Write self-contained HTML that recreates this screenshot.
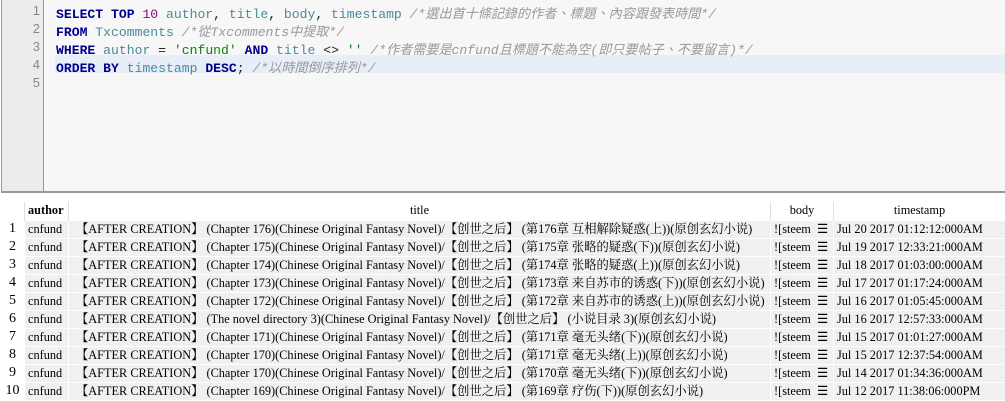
<html><head><style>
body{margin:0;width:1005px;height:401px;overflow:hidden;background:#fff;position:relative;font-family:"Liberation Serif","Noto Serif CJK SC",serif}
#ed{position:absolute;left:1px;top:0;width:1004px;height:193px;background:#f7f7f7;border-left:1px solid #999;border-bottom:2px solid #999;box-sizing:border-box}
#gut{position:absolute;left:0;top:0;width:41px;height:100%;background:#ececec;border-right:1px solid #999}
.ln{position:absolute;left:0;width:38px;text-align:right;font:13px "Liberation Sans",sans-serif;color:#888}
.cl{position:absolute;left:54px;font:13.1px "Liberation Mono","Noto Sans CJK TC",monospace;white-space:pre;color:#4a8a9a}
.k{color:#000090;font-weight:bold}.n{color:#900090}.s{color:#108010}.c{color:#999;font-style:italic}.o{color:#222}
table{position:absolute;left:0;top:202px;width:1005px;border-collapse:collapse;font-size:12.3px;table-layout:fixed}
td{height:18px;padding:0 0 0 3px;border:1px solid #fff;background:#f0f0f0;white-space:nowrap;overflow:hidden;line-height:16px}
th{height:18px;font-weight:normal;background:#fff;border-right:1px solid #e0e0e0;padding:0;overflow:hidden}
td.r{background:#fff;text-align:center;font-size:14px;padding:0}
td.t{padding-left:7px}
</style></head><body>
<div id="ed"><div id="gut"></div>
<div style="position:absolute;left:53px;top:55px;right:0;height:18px;background:#e8eef8"></div>
<div class="ln" style="top:3px">1</div><div class="ln" style="top:21px">2</div><div class="ln" style="top:39px">3</div><div class="ln" style="top:57px">4</div><div class="ln" style="top:75px">5</div>
<div class="cl" style="top:3px"><span class="k">SELECT TOP</span> <span class="n">10</span> author<span class="o">,</span> title<span class="o">,</span> body<span class="o">,</span> timestamp <span class="c">/*選出首十條記錄的作者、標題、內容跟發表時間*/</span></div>
<div class="cl" style="top:21px"><span class="k">FROM</span> Txcomments <span class="c">/*從Txcomments中提取*/</span></div>
<div class="cl" style="top:39px"><span class="k">WHERE</span> author <span class="o">=</span> <span class="s">'cnfund'</span> <span class="k">AND</span> title <span class="o">&lt;&gt;</span> <span class="s">''</span> <span class="c">/*作者需要是cnfund且標題不能為空(即只要帖子、不要留言)*/</span></div>
<div class="cl" style="top:57px"><span class="k">ORDER BY</span> timestamp <span class="k">DESC</span><span class="o">;</span> <span class="c">/*以時間倒序排列*/</span></div>
</div>
<table>
<colgroup><col style="width:24px"><col style="width:44px"><col style="width:702px"><col style="width:63px"><col style="width:172px"></colgroup>
<tr><th></th><th style="font-weight:bold;text-align:left;padding-left:3px">author</th><th>title</th><th>body</th><th>timestamp</th></tr>
<tr><td class="r">1</td><td>cnfund</td><td class="t">【AFTER CREATION】 (Chapter 176)(Chinese Original Fantasy Novel)/【创世之后】 (第176章 互相解除疑惑(上))(原创玄幻小说)</td><td>![steem &nbsp;☰</td><td>Jul 20 2017 01:12:12:000AM</td></tr>
<tr><td class="r">2</td><td>cnfund</td><td class="t">【AFTER CREATION】 (Chapter 175)(Chinese Original Fantasy Novel)/【创世之后】 (第175章 张略的疑惑(下))(原创玄幻小说)</td><td>![steem &nbsp;☰</td><td>Jul 19 2017 12:33:21:000AM</td></tr>
<tr><td class="r">3</td><td>cnfund</td><td class="t">【AFTER CREATION】 (Chapter 174)(Chinese Original Fantasy Novel)/【创世之后】 (第174章 张略的疑惑(上))(原创玄幻小说)</td><td>![steem &nbsp;☰</td><td>Jul 18 2017 01:03:00:000AM</td></tr>
<tr><td class="r">4</td><td>cnfund</td><td class="t">【AFTER CREATION】 (Chapter 173)(Chinese Original Fantasy Novel)/【创世之后】 (第173章 来自苏市的诱惑(下))(原创玄幻小说)</td><td>![steem &nbsp;☰</td><td>Jul 17 2017 01:17:24:000AM</td></tr>
<tr><td class="r">5</td><td>cnfund</td><td class="t">【AFTER CREATION】 (Chapter 172)(Chinese Original Fantasy Novel)/【创世之后】 (第172章 来自苏市的诱惑(上))(原创玄幻小说)</td><td>![steem &nbsp;☰</td><td>Jul 16 2017 01:05:45:000AM</td></tr>
<tr><td class="r">6</td><td>cnfund</td><td class="t">【AFTER CREATION】 (The novel directory 3)(Chinese Original Fantasy Novel)/【创世之后】 (小说目录 3)(原创玄幻小说)</td><td>![steem &nbsp;☰</td><td>Jul 16 2017 12:57:33:000AM</td></tr>
<tr><td class="r">7</td><td>cnfund</td><td class="t">【AFTER CREATION】 (Chapter 171)(Chinese Original Fantasy Novel)/【创世之后】 (第171章 毫无头绪(下))(原创玄幻小说)</td><td>![steem &nbsp;☰</td><td>Jul 15 2017 01:01:27:000AM</td></tr>
<tr><td class="r">8</td><td>cnfund</td><td class="t">【AFTER CREATION】 (Chapter 170)(Chinese Original Fantasy Novel)/【创世之后】 (第171章 毫无头绪(上))(原创玄幻小说)</td><td>![steem &nbsp;☰</td><td>Jul 15 2017 12:37:54:000AM</td></tr>
<tr><td class="r">9</td><td>cnfund</td><td class="t">【AFTER CREATION】 (Chapter 170)(Chinese Original Fantasy Novel)/【创世之后】 (第170章 毫无头绪(下))(原创玄幻小说)</td><td>![steem &nbsp;☰</td><td>Jul 14 2017 01:34:36:000AM</td></tr>
<tr><td class="r">10</td><td>cnfund</td><td class="t">【AFTER CREATION】 (Chapter 169)(Chinese Original Fantasy Novel)/【创世之后】 (第169章 疗伤(下))(原创玄幻小说)</td><td>![steem &nbsp;☰</td><td>Jul 12 2017 11:38:06:000PM</td></tr>
</table>
</body></html>
